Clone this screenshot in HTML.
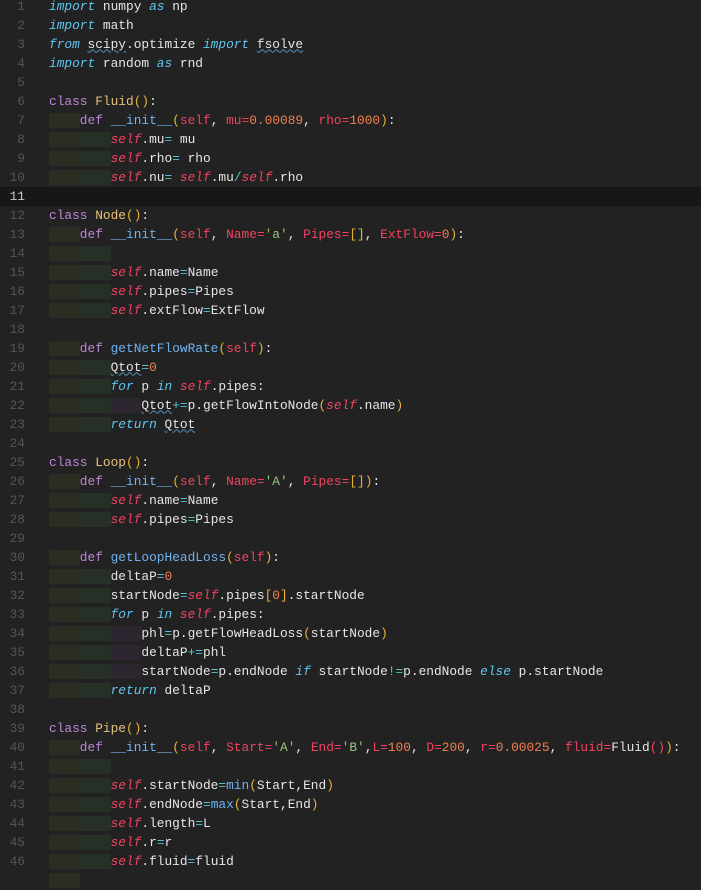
<!DOCTYPE html>
<html><head><meta charset="utf-8"><style>
body{margin:0;background:#222222;width:701px;height:876px;overflow:hidden;font-family:"Liberation Mono",monospace;font-size:12.83px;color:#e6e6e6}
#w{position:absolute;top:-3.5px;left:0;width:701px}
.l{height:19px;line-height:19px;white-space:pre;position:relative}
.ln{position:absolute;left:0;width:25px;text-align:right;color:#555555}
.c{position:absolute;left:49px}
.cur{background:#171717}
.i1{background:#2c2d22}.i2{background:#273027}.i3{background:#2d2630}
.k{color:#5fc6ef;font-style:italic}
.d{color:#c084d8}
.n{color:#e5c07b}
.p{color:#e8b13a}
.s{color:#f0435f;font-style:italic}
.a{color:#f0435f}
.m{color:#f08050}
.o{color:#56c2d6}
.f{color:#6fb3f0}
.g{color:#98c379}
.u{text-decoration:underline wavy #4f8fbf;text-decoration-thickness:1px}
</style></head><body><div id="w">
<div class="l"><span class="ln">1</span><span class="c"><span class="k">import</span> numpy <span class="k">as</span> np</span></div>
<div class="l"><span class="ln">2</span><span class="c"><span class="k">import</span> math</span></div>
<div class="l"><span class="ln">3</span><span class="c"><span class="k">from</span> <span class="u">scipy</span>.optimize <span class="k">import</span> <span class="u">fsolve</span></span></div>
<div class="l"><span class="ln">4</span><span class="c"><span class="k">import</span> random <span class="k">as</span> rnd</span></div>
<div class="l"><span class="ln">5</span></div>
<div class="l"><span class="ln">6</span><span class="c"><span class="d">class</span> <span class="n">Fluid</span><span class="p">()</span>:</span></div>
<div class="l"><span class="ln">7</span><span class="c"><span class="i1">    </span><span class="d">def</span> <span class="f">__init__</span><span class="p">(</span><span class="a">self</span>, <span class="a">mu=</span><span class="m">0.00089</span>, <span class="a">rho=</span><span class="m">1000</span><span class="p">)</span>:</span></div>
<div class="l"><span class="ln">8</span><span class="c"><span class="i1">    </span><span class="i2">    </span><span class="s">self</span>.mu<span class="o">=</span> mu</span></div>
<div class="l"><span class="ln">9</span><span class="c"><span class="i1">    </span><span class="i2">    </span><span class="s">self</span>.rho<span class="o">=</span> rho</span></div>
<div class="l"><span class="ln">10</span><span class="c"><span class="i1">    </span><span class="i2">    </span><span class="s">self</span>.nu<span class="o">=</span> <span class="s">self</span>.mu<span class="o">/</span><span class="s">self</span>.rho</span></div>
<div class="l cur"><span class="ln" style="color:#c8c8c8">11</span></div>
<div class="l"><span class="ln">12</span><span class="c"><span class="d">class</span> <span class="n">Node</span><span class="p">()</span>:</span></div>
<div class="l"><span class="ln">13</span><span class="c"><span class="i1">    </span><span class="d">def</span> <span class="f">__init__</span><span class="p">(</span><span class="a">self</span>, <span class="a">Name=</span><span class="g">'a'</span>, <span class="a">Pipes=</span><span class="p">[]</span>, <span class="a">ExtFlow=</span><span class="m">0</span><span class="p">)</span>:</span></div>
<div class="l"><span class="ln">14</span><span class="c"><span class="i1">    </span><span class="i2">    </span></span></div>
<div class="l"><span class="ln">15</span><span class="c"><span class="i1">    </span><span class="i2">    </span><span class="s">self</span>.name<span class="o">=</span>Name</span></div>
<div class="l"><span class="ln">16</span><span class="c"><span class="i1">    </span><span class="i2">    </span><span class="s">self</span>.pipes<span class="o">=</span>Pipes</span></div>
<div class="l"><span class="ln">17</span><span class="c"><span class="i1">    </span><span class="i2">    </span><span class="s">self</span>.extFlow<span class="o">=</span>ExtFlow</span></div>
<div class="l"><span class="ln">18</span></div>
<div class="l"><span class="ln">19</span><span class="c"><span class="i1">    </span><span class="d">def</span> <span class="f">getNetFlowRate</span><span class="p">(</span><span class="a">self</span><span class="p">)</span>:</span></div>
<div class="l"><span class="ln">20</span><span class="c"><span class="i1">    </span><span class="i2">    </span><span class="u">Qtot</span><span class="o">=</span><span class="m">0</span></span></div>
<div class="l"><span class="ln">21</span><span class="c"><span class="i1">    </span><span class="i2">    </span><span class="k">for</span> p <span class="k">in</span> <span class="s">self</span>.pipes:</span></div>
<div class="l"><span class="ln">22</span><span class="c"><span class="i1">    </span><span class="i2">    </span><span class="i3">    </span><span class="u">Qtot</span><span class="o">+=</span>p.getFlowIntoNode<span class="p">(</span><span class="s">self</span>.name<span class="p">)</span></span></div>
<div class="l"><span class="ln">23</span><span class="c"><span class="i1">    </span><span class="i2">    </span><span class="k">return</span> <span class="u">Qtot</span></span></div>
<div class="l"><span class="ln">24</span></div>
<div class="l"><span class="ln">25</span><span class="c"><span class="d">class</span> <span class="n">Loop</span><span class="p">()</span>:</span></div>
<div class="l"><span class="ln">26</span><span class="c"><span class="i1">    </span><span class="d">def</span> <span class="f">__init__</span><span class="p">(</span><span class="a">self</span>, <span class="a">Name=</span><span class="g">'A'</span>, <span class="a">Pipes=</span><span class="p">[])</span>:</span></div>
<div class="l"><span class="ln">27</span><span class="c"><span class="i1">    </span><span class="i2">    </span><span class="s">self</span>.name<span class="o">=</span>Name</span></div>
<div class="l"><span class="ln">28</span><span class="c"><span class="i1">    </span><span class="i2">    </span><span class="s">self</span>.pipes<span class="o">=</span>Pipes</span></div>
<div class="l"><span class="ln">29</span></div>
<div class="l"><span class="ln">30</span><span class="c"><span class="i1">    </span><span class="d">def</span> <span class="f">getLoopHeadLoss</span><span class="p">(</span><span class="a">self</span><span class="p">)</span>:</span></div>
<div class="l"><span class="ln">31</span><span class="c"><span class="i1">    </span><span class="i2">    </span>deltaP<span class="o">=</span><span class="m">0</span></span></div>
<div class="l"><span class="ln">32</span><span class="c"><span class="i1">    </span><span class="i2">    </span>startNode<span class="o">=</span><span class="s">self</span>.pipes<span class="p">[</span><span class="m">0</span><span class="p">]</span>.startNode</span></div>
<div class="l"><span class="ln">33</span><span class="c"><span class="i1">    </span><span class="i2">    </span><span class="k">for</span> p <span class="k">in</span> <span class="s">self</span>.pipes:</span></div>
<div class="l"><span class="ln">34</span><span class="c"><span class="i1">    </span><span class="i2">    </span><span class="i3">    </span>phl<span class="o">=</span>p.getFlowHeadLoss<span class="p">(</span>startNode<span class="p">)</span></span></div>
<div class="l"><span class="ln">35</span><span class="c"><span class="i1">    </span><span class="i2">    </span><span class="i3">    </span>deltaP<span class="o">+=</span>phl</span></div>
<div class="l"><span class="ln">36</span><span class="c"><span class="i1">    </span><span class="i2">    </span><span class="i3">    </span>startNode<span class="o">=</span>p.endNode <span class="k">if</span> startNode<span class="o">!=</span>p.endNode <span class="k">else</span> p.startNode</span></div>
<div class="l"><span class="ln">37</span><span class="c"><span class="i1">    </span><span class="i2">    </span><span class="k">return</span> deltaP</span></div>
<div class="l"><span class="ln">38</span></div>
<div class="l"><span class="ln">39</span><span class="c"><span class="d">class</span> <span class="n">Pipe</span><span class="p">()</span>:</span></div>
<div class="l"><span class="ln">40</span><span class="c"><span class="i1">    </span><span class="d">def</span> <span class="f">__init__</span><span class="p">(</span><span class="a">self</span>, <span class="a">Start=</span><span class="g">'A'</span>, <span class="a">End=</span><span class="g">'B'</span>,<span class="a">L=</span><span class="m">100</span>, <span class="a">D=</span><span class="m">200</span>, <span class="a">r=</span><span class="m">0.00025</span>, <span class="a">fluid=</span>Fluid<span class="a">()</span><span class="p">)</span>:</span></div>
<div class="l"><span class="ln">41</span><span class="c"><span class="i1">    </span><span class="i2">    </span></span></div>
<div class="l"><span class="ln">42</span><span class="c"><span class="i1">    </span><span class="i2">    </span><span class="s">self</span>.startNode<span class="o">=</span><span class="f">min</span><span class="p">(</span>Start,End<span class="p">)</span></span></div>
<div class="l"><span class="ln">43</span><span class="c"><span class="i1">    </span><span class="i2">    </span><span class="s">self</span>.endNode<span class="o">=</span><span class="f">max</span><span class="p">(</span>Start,End<span class="p">)</span></span></div>
<div class="l"><span class="ln">44</span><span class="c"><span class="i1">    </span><span class="i2">    </span><span class="s">self</span>.length<span class="o">=</span>L</span></div>
<div class="l"><span class="ln">45</span><span class="c"><span class="i1">    </span><span class="i2">    </span><span class="s">self</span>.r<span class="o">=</span>r</span></div>
<div class="l"><span class="ln">46</span><span class="c"><span class="i1">    </span><span class="i2">    </span><span class="s">self</span>.fluid<span class="o">=</span>fluid</span></div>
<div class="l"><span class="ln"></span><span class="c"><span class="i1">    </span></span></div>
</div></body></html>
